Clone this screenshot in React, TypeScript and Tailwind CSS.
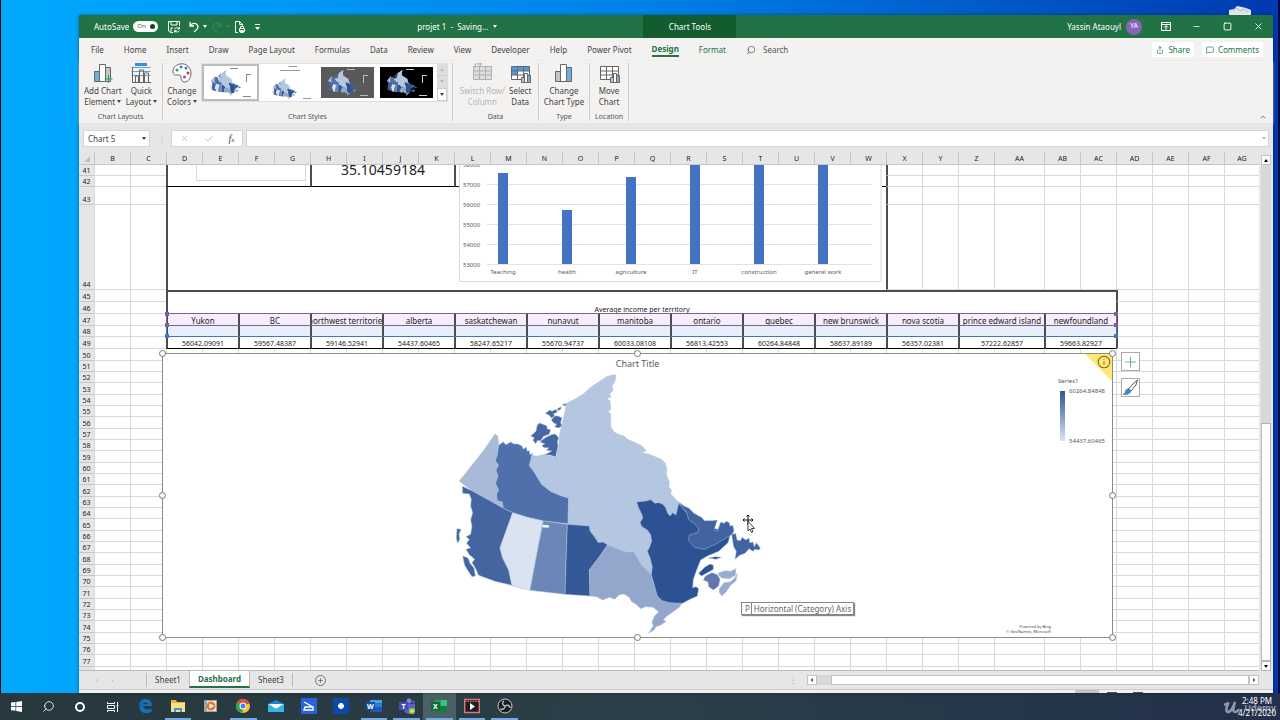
import type { ReactNode } from "react";
import { Check, ChevronUp, Info, MessageSquare, Minus, Plus, Search, Share, Square, X } from "lucide-react";
import clsx from "clsx";

const MENU_TABS = [
  "File",
  "Home",
  "Insert",
  "Draw",
  "Page Layout",
  "Formulas",
  "Data",
  "Review",
  "View",
  "Developer",
  "Help",
  "Power Pivot",
];

const COLUMNS = [
  "B", "C", "D", "E", "F", "G", "H", "I", "J", "K", "L", "M", "N", "O", "P", "Q",
  "R", "S", "T", "U", "V", "W", "X", "Y", "Z", "AA", "AB", "AC", "AD", "AE", "AF", "AG",
];

const TERRITORIES = [
  { name: "Yukon", income: "56042.09091" },
  { name: "BC", income: "59567.48387" },
  { name: "northwest territories", income: "59146.52941" },
  { name: "alberta", income: "54437.60465" },
  { name: "saskatchewan", income: "58247.65217" },
  { name: "nunavut", income: "55670.94737" },
  { name: "manitoba", income: "60033.08108" },
  { name: "ontario", income: "56813.42553" },
  { name: "quebec", income: "60264.84848" },
  { name: "new brunswick", income: "58637.89189" },
  { name: "nova scotia", income: "56357.02381" },
  { name: "prince edward island", income: "57222.62857" },
  { name: "newfoundland", income: "59663.82927" },
];

const JOBS = [
  { name: "Teaching", top: 8 },
  { name: "health", top: 45 },
  { name: "agriculture", top: 12 },
  { name: "IT", top: 0 },
  { name: "construction", top: 0 },
  { name: "general work", top: 0 },
];

const REGIONS = [
  { id: "yukon", fill: "#a9bad8", d: "M165 204L173 210 176 230 172 268 166 284 176 298 168 312 174 330 167 352 176 372 170 385 172 404 187 408 190 426 150 404 100 378 58 345 90 305 132 252z" },
  { id: "nwt", fill: "#4f70aa", d: "M176 238L184 232 190 228 198 236 212 228 222 234 234 234 246 240 250 250 258 243 262 256 268 254 270 266 278 262 274 272 272 285 268 298 285 322 305 355 332 376 360 388 386 396 384 473 345 469 310 465 262 454 218 440 190 427 187 408 172 404 170 385 176 372 167 352 174 330 168 312 176 298 166 284 172 268z" },
  { id: "banks", fill: "#4667a4", d: "M272 210l16-14 4-20 8-5 8 4 12 4 2 10 10 2-5 14-16 6-10 14-8-2-6 10-8-10 4-8z" },
  { id: "victoria", fill: "#4667a4", d: "M306 222l12-8 16-8 12-2 10 12-4 12 2 12-7 33-14-5-20-2 12-5 10-6-16-2 8-8-14 0-8-6 10-6-14-4z" },
  { id: "melville", fill: "#4667a4", d: "M316 142l14-10 6 4 12-6 4 8-12 6 4 6-10 6-6-8zM352 128l12-6-2 8-8 4zM366 116l14-4-4 8zM334 162l10-12 10 0 12 6-4 14 4 10-10 6-12-4 6-8-8-2z" },
  { id: "nunavut", fill: "#b4c6e0", d: "M380 112L404 100 430 84 452 64 476 48 500 32 518 27 528 27 524 48 516 60 519 74 508 84 514 92 500 98 510 104 512 130 504 136 512 145 512 182 522 198 538 206 552 210 562 220 586 230 606 240 618 254 605 260 625 264 640 270 664 280 676 292 681 312 678 322 684 338 688 352 686 362 694 372 692 384 702 394 718 412 716 430 708 447 698 440 690 450 682 440 677 425 668 414 655 410 645 412 632 401 618 405 590 408 596 426 606 446 608 456 600 470 606 482 622 492 632 506 635 526 628 545 622 556 630 575 637 602 634 626 618 610 605 598 594 576 585 560 570 556 556 558 535 550 505 536 488 528 475 530 466 516 450 495 448 480 384 474 386 396 360 388 332 376 305 355 285 322 268 298 272 285 276 268 290 271 310 266 330 270 349 274 356 240 360 200 370 160z" },
  { id: "bc", fill: "#44659f", d: "M67 361L95 374 150 404 190 427 218 440 200 490 180 546 188 576 206 612 216 658 165 646 116 628 106 606 96 590 104 580 88 566 78 550 92 546 80 532 88 520 78 512 92 505 96 480 92 462 98 440 92 420 94 400 88 384 68 382zM51 488L63 490 57 504 59 520 53 532 49 516zM68 570L84 576 90 592 102 606 106 630 96 632 84 614 74 598z" },
  { id: "alberta", fill: "#dae3f1", d: "M218 440L262 454 310 465 296 535 270 673 216 660 206 612 188 576 180 546 200 490z" },
  { id: "saskatchewan", fill: "#6a87b7", d: "M310 465L382 475 380 520 375 685 270 673 296 535z" },
  { id: "lake", fill: "#ffffff", d: "M306 476L328 478 326 485 308 484z" },
  { id: "manitoba", fill: "#335997", d: "M382 475L448 480 450 495 466 516 475 530 488 528 503 536 480 570 448 612 450 690 375 685z" },
  { id: "ontario", fill: "#93a7cd", d: "M503 536L535 550 556 558 582 558 594 578 605 598 618 610 634 626 642 655 652 690 666 704 690 710 728 708 718 724 698 738 678 752 670 762 678 766 664 776 648 782 642 792 626 801 640 780 636 768 644 750 656 738 640 724 616 722 602 728 590 716 574 706 568 694 552 684 538 686 524 700 508 694 488 702 470 692 450 690 448 612 480 570z" },
  { id: "quebec", fill: "#2c5294", d: "M590 408L618 405 632 401 645 412 655 410 668 414 677 425 682 440 690 450 698 440 708 447 716 412 740 440 800 480 872 502 864 530 836 556 802 570 782 582 770 612 760 640 758 665 768 662 776 668 772 690 750 700 728 712 690 710 666 704 652 690 642 655 634 626 637 602 630 575 622 556 628 545 635 526 632 506 622 492 606 482 600 470 608 456 606 446 596 426z" },
  { id: "labrador", fill: "#41639f", d: "M716 408l16 12 14 6 16 16 22 12 10 10 22 0 16-2-10 30 10 4 10-28 10 4 8-6 8 4 2 10 8-2 4 14-4 12-50 30-36 16-28-6-20-22 4-15 26-8 2-12-12-14-18-12-6-22-14-14z" },
  { id: "newfoundland", fill: "#41639f", d: "M875 506l12-4 4 20 10 2 6-10 10 8 10-6 2 14 10-2 4 14 6-12 12 16-4 6-12-2-6 6-12-8-12 14-16 6-14 12 4-24-8-14z" },
  { id: "gaspe", fill: "#2c5294", d: "M776 622l18-18 16-10 10 4 0 12-14 8-22 12zM806 576l20-4 18 2-16 6z" },
  { id: "new-brunswick", fill: "#6175af", d: "M796 630l20-10 16 6 8 14-4 20-16 12-14-10-2-14-14-6z" },
  { id: "nova-scotia", fill: "#9aabd0", d: "M836 620l20-6 16 2 16-8-2 20-18 10-22-2-10-8zM838 668l14-18 18-2 14-12 8-14-4 22-16 14-14 20-12 12-8-10z" },
];

const GRIDLINE = "border-l border-b border-[#d9d9d9]";

function CanadaMap({ className }: { className?: string }) {
  return (
    <svg viewBox="0 0 1020 825" className={className} aria-hidden="true">
      {REGIONS.map((r) => (
        <path key={r.id} d={r.d} fill={r.fill} stroke="#a9bcdc" strokeWidth="1.5" strokeLinejoin="round" />
      ))}
    </svg>
  );
}

function Caret({ up = false }: { up?: boolean }) {
  return (
    <svg width="4" height="3" viewBox="0 0 4 3" fill="currentColor" className="inline-block shrink-0">
      <path d={up ? "M0 3h4L2 0z" : "M0 0h4L2 3z"} />
    </svg>
  );
}

function TitleBar() {
  return (
    <header className="flex h-[23px] shrink-0 items-center bg-[#217346] pl-[15px] text-[8px] text-white">
      <label className="flex items-center gap-1">
        AutoSave
        <input type="checkbox" defaultChecked className="sr-only" />
        <span className="flex h-[11px] w-[25px] items-center justify-between rounded-full bg-white pr-[3px] pl-1 text-[6px] text-[#217346]">
          On
          <span className="size-[5px] rounded-full bg-[#1f3d2c]" />
        </span>
      </label>
      <button aria-label="Save" className="ml-[10px]">
        <svg width="12" height="12" viewBox="0 0 12 12" fill="none" stroke="currentColor">
          <path d="M5 11.500H2.500L.5 10V.5h11V5M3 .5v3.500h6V.5M3 11V7h2" />
          <path d="M11.500 6v2H9.500M6.500 11.500v-2h2M6.500 8a2.500 2 0 0 1 4.500-.3M11.300 9.700a2.500 2 0 0 1-4.500.3" />
        </svg>
      </button>
      <button aria-label="Undo" className="ml-2 flex items-center gap-[3px]">
        <svg width="12" height="12" viewBox="0 0 12 12" fill="none" stroke="currentColor" strokeWidth="1.3">
          <path d="M2 1v4h4M2 5c2-3 5-3.500 7-1.500s1 4.500-3 7.500" />
        </svg>
        <Caret />
      </button>
      <button aria-label="Redo" className="ml-1 flex items-center gap-[3px] text-[#3a8359]">
        <svg width="12" height="12" viewBox="0 0 12 12" fill="none" stroke="currentColor" strokeWidth="1.3">
          <path d="M10 1v4H6M10 5C8 2 5 1.500 3 3.500S2 8 6 11" />
        </svg>
        <Caret />
      </button>
      <button aria-label="Print preview" className="ml-1">
        <svg width="11" height="12" viewBox="0 0 11 12" fill="none" stroke="currentColor">
          <path d="M4 11.500H1.500V.5h4l3 3v1.500M5.500.5v3h3M5.500 7.500h5v3h-5zM6.500 7V5.500h3V7M6.500 9.500h3v2h-3z" />
        </svg>
      </button>
      <button aria-label="Customize toolbar" className="ml-[10px]">
        <svg width="5" height="6" viewBox="0 0 5 6" fill="currentColor">
          <path d="M0 0h5v1H0zM0 3h5L2.500 6z" />
        </svg>
      </button>
      <div className="ml-[157px] flex items-center gap-[5px]">
        <span>projet 1&nbsp; -&nbsp; Saving...</span>
        <Caret />
      </div>
      <div className="ml-[146px] flex h-full w-[93px] items-center justify-center bg-[#125c30]">Chart Tools</div>
      <div className="ml-auto flex items-center">
        <span>Yassin Ataouyl</span>
        <span className="mr-2 ml-[5px] flex size-4 items-center justify-center rounded-full bg-[#8764b8] text-[7px]">
          YA
        </span>
        <button aria-label="Ribbon display options" className="flex w-[31px] justify-center">
          <svg width="10" height="9" viewBox="0 0 10 9" fill="none" stroke="currentColor">
            <path d="M.5.5h9v8h-9zM.5 2.500h9M5 8V4M3 5.500l2-2 2 2" />
          </svg>
        </button>
        <button aria-label="Minimize" className="flex w-[31px] justify-center">
          <Minus size={9} />
        </button>
        <button aria-label="Restore" className="flex w-[31px] justify-center">
          <Square size={9} strokeWidth={2.500} />
        </button>
        <button aria-label="Close" className="flex w-[30px] justify-center">
          <X size={11} />
        </button>
      </div>
    </header>
  );
}

function MenuBar() {
  return (
    <nav className="flex h-[23px] shrink-0 items-center pr-[10px] pl-3 text-[8px] text-[#444]">
      <div className="flex items-center gap-5">
        {MENU_TABS.map((tab) => (
          <button key={tab}>{tab}</button>
        ))}
        <button className="border-b-2 border-[#217346] font-bold text-[#217346]">Design</button>
        <button className="text-[#217346]">Format</button>
      </div>
      <label className="ml-5 flex items-center gap-[7px]">
        <Search size={10} strokeWidth={1.500} className="-scale-x-100" />
        <input aria-label="Search" placeholder="Search" className="w-16 bg-transparent outline-none placeholder:text-[#555]" />
      </label>
      <button className="ml-auto flex h-[15px] items-center gap-1 bg-white px-1 text-[#217346]">
        <Share size={8} /> Share
      </button>
      <button className="ml-2 flex h-[15px] items-center gap-1 bg-white px-1 text-[#217346]">
        <MessageSquare size={8} /> Comments
      </button>
    </nav>
  );
}

function BarsIcon({ plus = false }: { plus?: boolean }) {
  return (
    <svg width="20" height="20" viewBox="0 0 20 20" strokeWidth="1" stroke="#666">
      <path d="M1.500 8.500h5v10h-5z" fill={plus ? "#6cb0e2" : "#c4c4c4"} />
      <path d="M12.500 4.500h5v14h-5z" fill={plus ? "#c4c4c4" : "#6cb0e2"} />
      <path d="M6.500 1.500h6v17h-6z" fill="#fff" />
      {plus && <path d="M15.500 12v8M11.500 16h8" stroke="#2e9e5b" />}
    </svg>
  );
}

function LayoutIcon() {
  return (
    <svg width="20" height="20" viewBox="0 0 20 20" fill="none" stroke="#666">
      <path d="M4 0h12v3H4z" fill="#3f8fce" stroke="none" />
      <path d="M.5 4.500h19M.5 8.500h19M.5 12.500h19" stroke="#5ea6dc" />
      <path d="M1.500 4v15.500H20M4.500 19v-6h3v6M8.500 19V7h4v12M13.500 19V10h4v9" />
    </svg>
  );
}

function PaletteIcon() {
  return (
    <svg width="20" height="20" viewBox="0 0 20 20">
      <path
        d="M10 .8C4.500.8 1 4.500 1 8.500c0 3 2 4 4 3.500 2.500-.5 4 0 4 2.500 0 2.500 1 4.500 3.500 4.500 4 0 6.500-4 6.500-9S15 .8 10 .8z"
        fill="#fff"
        stroke="#666"
      />
      <circle cx="5" cy="7" r="1.500" fill="#2e9e5b" />
      <circle cx="9" cy="4" r="1.500" fill="#3f78c8" />
      <circle cx="14" cy="5" r="1.500" fill="#3f78c8" />
      <circle cx="16" cy="10" r="1.500" fill="#c43e3e" />
      <circle cx="12.500" cy="14" r="1.500" fill="#a04fb4" />
    </svg>
  );
}

function TableIcon({ kind }: { kind: "switch" | "select" | "move" }) {
  const line = kind === "switch" ? "#b0b0b0" : "#666";
  return (
    <svg width="21" height="20" viewBox="0 0 21 20" fill="none" stroke={line}>
      <path d="M1.500 3.500h18v13h-18z" fill={kind === "switch" ? "#dedede" : "#fff"} />
      {kind === "select" && <path d="M2 4h17v4H2zM2 8h6v4H2z" fill="#4a9be0" stroke="none" />}
      <path d="M1.500 8h18M1.500 12h18M7.500 3.500v13M13.500 3.500v13" />
      {kind === "switch" && <path d="M3 5V1h6M7 0l3 1-3 2" />}
      {kind !== "switch" && (
        <>
          <path d="M11.500 14.500h3v5h-3z" fill="#c4c4c4" />
          <path d="M14.500 10.500h3v9h-3z" fill="#fff" />
          <path d="M17.500 12.500h3v7h-3z" fill="#6cb0e2" />
        </>
      )}
    </svg>
  );
}

function RibbonButton({
  icon,
  lines,
  caret,
  disabled,
}: {
  icon: ReactNode;
  lines: [string, string];
  caret?: boolean;
  disabled?: boolean;
}) {
  return (
    <button
      disabled={disabled}
      className={clsx("flex flex-col items-center leading-[11px] whitespace-nowrap", disabled && "text-[#b5b5b5]")}
    >
      <span className="mb-[2px] flex h-5 items-center">{icon}</span>
      <span>{lines[0]}</span>
      <span className="flex items-center gap-[2px]">
        {lines[1]}
        {caret && <Caret />}
      </span>
    </button>
  );
}

function RibbonGroup({ label, className, children }: { label: string; className: string; children: ReactNode }) {
  return (
    <section className={clsx("flex shrink-0 flex-col justify-between border-r border-[#cfcdcb]", className)}>
      <div className="flex justify-center">{children}</div>
      <p className="text-center text-[7px] leading-[8px] text-[#555]">{label}</p>
    </section>
  );
}

function StyleThumb({ className, rule, small }: { className: string; rule: string; small?: boolean }) {
  return (
    <button aria-label="Chart style" className={clsx("relative flex items-center justify-center", className)}>
      <CanadaMap className={clsx("mr-2", small ? "mt-3 h-[22px] w-[28px]" : "h-[28px] w-[34px]")} />
      <span className={clsx("absolute top-[2px] left-1/2 h-px w-2", rule)} />
      <span className={clsx("absolute right-[6px] bottom-[2px] h-px w-2", rule)} />
      {!small && <span className={clsx("absolute top-2 right-[10px] h-2 w-px", rule)} />}
      {!small && <span className={clsx("absolute top-2 right-[6px] h-px w-[5px]", rule)} />}
      {small && <span className={clsx("absolute top-[6px] left-1/3 h-px w-5", rule)} />}
    </button>
  );
}

function Ribbon() {
  return (
    <div className="flex h-[62px] shrink-0 pt-[2px] pb-[2px] text-[8px] text-[#444] shadow-[0_1px_2px_#bbb]">
      <RibbonGroup label="Chart Layouts" className="w-[84px]">
        <div className="flex gap-1">
          <RibbonButton icon={<BarsIcon plus />} lines={["Add Chart", "Element"]} caret />
          <RibbonButton icon={<LayoutIcon />} lines={["Quick", "Layout"]} caret />
        </div>
      </RibbonGroup>
      <RibbonGroup label="Chart Styles" className="w-[290px]">
        <div className="flex gap-1">
          <RibbonButton icon={<PaletteIcon />} lines={["Change", "Colors"]} caret />
          <div className="flex h-[39px] border border-[#dedede] bg-white">
            <StyleThumb className="w-[57px] border-2 border-[#bcbcbc] bg-white" rule="bg-[#888]" />
            <StyleThumb className="mx-[2px] w-14 bg-white" rule="bg-[#999]" small />
            <StyleThumb className="mx-[2px] my-[3px] w-[53px] bg-[#595959]" rule="bg-[#bbb]" />
            <StyleThumb className="mx-[4px] my-[3px] w-[53px] bg-black" rule="bg-[#ccc]" />
            <div className="flex w-[10px] flex-col bg-[#dedede]">
              <button aria-label="Previous styles" className="flex flex-1 items-center justify-center text-[#bbb]">
                <Caret up />
              </button>
              <button aria-label="Next styles" className="flex flex-1 items-center justify-center border-t border-[#ccc] text-[#bbb]">
                <Caret />
              </button>
              <button aria-label="More styles" className="flex flex-1 items-center justify-center border border-[#ccc] bg-white">
                <Caret />
              </button>
            </div>
          </div>
        </div>
      </RibbonGroup>
      <RibbonGroup label="Data" className="w-[86px]">
        <div className="flex gap-1">
          <RibbonButton icon={<TableIcon kind="switch" />} lines={["Switch Row/", "Column"]} disabled />
          <RibbonButton icon={<TableIcon kind="select" />} lines={["Select", "Data"]} />
        </div>
      </RibbonGroup>
      <RibbonGroup label="Type" className="w-[51px]">
        <RibbonButton icon={<BarsIcon />} lines={["Change", "Chart Type"]} />
      </RibbonGroup>
      <RibbonGroup label="Location" className="w-[39px]">
        <RibbonButton icon={<TableIcon kind="move" />} lines={["Move", "Chart"]} />
      </RibbonGroup>
      <button aria-label="Collapse ribbon" className="mr-[6px] ml-auto self-end">
        <ChevronUp size={8} />
      </button>
    </div>
  );
}

function FormulaBar() {
  return (
    <div className="flex h-[29px] shrink-0 items-center bg-[#e6e6e6] pt-[2px] pr-1 pl-1 text-[8px] text-[#444]">
      <label className="relative flex w-[67px] items-center">
        <input
          aria-label="Name box"
          defaultValue="Chart 5"
          className="h-[17px] w-full border border-[#d4d4d4] bg-white pl-1"
        />
        <span className="absolute right-1 flex">
          <Caret />
        </span>
      </label>
      <span className="ml-2 w-[5px] text-center text-[#aaa]">⋮</span>
      <div className="ml-2 flex h-[17px] w-[72px] items-center justify-around border border-[#d4d4d4] bg-white">
        <button aria-label="Cancel" className="text-[#b5b5b5]">
          <X size={9} />
        </button>
        <button aria-label="Enter" className="text-[#b5b5b5]">
          <Check size={10} />
        </button>
        <button aria-label="Insert function" className="font-['Liberation_Serif',serif] text-[10px] leading-none italic">
          f<span className="text-[7px]">x</span>
        </button>
      </div>
      <label className="relative ml-[3px] flex flex-1 items-center">
        <input aria-label="Formula" className="h-[17px] w-full border border-[#d4d4d4] bg-white" />
        <span className="absolute right-[3px] flex text-[#bbb]">
          <Caret />
        </span>
      </label>
    </div>
  );
}

function rowHeight(row: number) {
  if (row === 43) return "h-[18px]";
  if (row === 44) return "h-[85px]";
  if (row === 41 || row === 42 || row === 48) return "h-[11px]";
  if (row <= 50) return "h-3";
  return row % 3 === 2 ? "h-3" : "h-[11px]";
}

// `edge` closes the framed block that sits to the left of the first cell
function Blanks({ count, edge = false }: { count: number; edge?: boolean }) {
  return (
    <>
      {Array.from({ length: count }, (_, i) => (
        <td
          key={i}
          className={edge && i === 0 ? "border-b border-l-2 border-b-[#d9d9d9] border-l-[#4d4d4d]" : GRIDLINE}
        />
      ))}
    </>
  );
}

function RowCells({ row }: { row: number }) {
  switch (row) {
    case 41:
      return (
        <>
          <td colSpan={4} rowSpan={2} className="border-b border-l-2 border-b-black border-l-[#4d4d4d]" />
          <td
            colSpan={4}
            rowSpan={2}
            className="border-b border-l-2 border-b-black border-l-[#4d4d4d] text-center align-top text-[14px] leading-[10px]"
          >
            35.10459184
          </td>
          <td colSpan={12} rowSpan={2} className="border-b border-l-2 border-b-black border-l-[#4d4d4d]" />
          <Blanks count={10} edge />
        </>
      );
    case 42:
    case 44:
      return <Blanks count={10} edge />;
    case 43:
      return (
        <>
          <td colSpan={20} rowSpan={2} className="border-l-2 border-[#4d4d4d]" />
          <Blanks count={10} edge />
        </>
      );
    case 45:
      return (
        <>
          <td colSpan={26} rowSpan={2} className="border-t-2 border-l-2 border-[#4d4d4d] text-center align-bottom">
            Average income per territory
          </td>
          <Blanks count={4} edge />
        </>
      );
    case 46:
      return <Blanks count={4} edge />;
    case 47:
    case 48:
    case 49:
      return (
        <>
          {TERRITORIES.map((t) => (
            <td
              key={t.name}
              colSpan={2}
              className={clsx(
                "border-l-2 border-l-[#4d4d4d]",
                row === 47 && "bg-[#f6effb]",
                row === 48 && "bg-[#e7effb]",
                row === 49 && "border-b border-b-black text-center align-bottom",
              )}
            >
              {row === 47 && (
                <div className="flex justify-center overflow-hidden text-[8px] whitespace-nowrap">{t.name}</div>
              )}
              {row === 49 && t.income}
            </td>
          ))}
          <Blanks count={4} edge />
        </>
      );
    default:
      return <Blanks count={30} />;
  }
}

function SheetTable() {
  const rows = Array.from({ length: 38 }, (_, i) => 41 + i);
  return (
    <table className="w-full table-fixed border-separate border-spacing-0 text-[7px] leading-[9px] text-[#222]">
      <colgroup>
        <col className="w-[15px]" />
        {COLUMNS.map((c) => (
          <col key={c} className={c === "AA" ? "w-[50px]" : c === "AG" ? undefined : "w-9"} />
        ))}
      </colgroup>
      <thead>
        <tr className="h-[13px] bg-[#e6e6e6]">
          <th className="border-b border-[#c6c6c6]">
            <svg width="13" height="10" viewBox="0 0 13 10" fill="#c0c0c0">
              <path d="M11 3v6H5z" />
            </svg>
          </th>
          {COLUMNS.map((c) => (
            <th key={c} className="border-b border-l border-[#c6c6c6] font-normal">
              {c}
            </th>
          ))}
        </tr>
      </thead>
      <tbody>
        {rows.map((row) => (
          <tr key={row} className={rowHeight(row)}>
            <th className="border-b border-[#c6c6c6] bg-[#e6e6e6] align-bottom font-normal">{row}</th>
            <Blanks count={2} />
            <RowCells row={row} />
          </tr>
        ))}
      </tbody>
    </table>
  );
}

function SelectionFrame() {
  return (
    <div className="pointer-events-none absolute top-[161px] left-[87px] w-[951px]">
      <div className="relative h-[13px] border border-[#7c609c]">
        <i className="absolute -top-[2px] -left-[2px] size-1 bg-[#7c609c]" />
        <i className="absolute -top-[2px] -right-[2px] size-1 bg-[#7c609c]" />
        <i className="absolute -bottom-[2px] -left-[2px] size-1 bg-[#7c609c]" />
        <i className="absolute -right-[2px] -bottom-[2px] size-1 bg-[#7c609c]" />
      </div>
      <div className="relative h-[11px] border border-t-0 border-[#4472c4]">
        <i className="absolute -bottom-[2px] -left-[2px] size-1 bg-[#4472c4]" />
        <i className="absolute -right-[2px] -bottom-[2px] size-1 bg-[#4472c4]" />
      </div>
    </div>
  );
}

function JobsChart() {
  return (
    <svg
      className="absolute top-[13px] left-[380px] bg-white"
      width="423"
      height="117"
      viewBox="0 0 423 117"
      role="img"
      aria-label="Average income per job"
    >
      <path d="M.5 0v116.500h421.500V0" fill="none" stroke="#d9d9d9" />
      {["58000", "57000", "56000", "55000", "54000", "53000"].map((label, i) => (
        <g key={label}>
          <path d={`M28 ${i * 20 - 0.5}h385`} stroke="#e2e2e2" />
          <text x="4" y={i * 20 + 2} fontSize="6" fill="#595959">
            {label}
          </text>
        </g>
      ))}
      {JOBS.map((job, i) => (
        <g key={job.name}>
          <rect x={39 + i * 64} y={job.top} width="10" height={99 - job.top} fill="#4472c4" />
          <text x={44 + i * 64} y="109" fontSize="6" fill="#595959" textAnchor="middle">
            {job.name}
          </text>
        </g>
      ))}
    </svg>
  );
}

function Handle({ className }: { className: string }) {
  return <i className={clsx("absolute size-[7px] rounded-full border border-[#777] bg-white", className)} />;
}

function MapChart() {
  return (
    <figure className="absolute top-[201px] left-[83px] h-[285px] w-[951px] border border-[#8c8c8c] bg-white">
      <figcaption className="pt-1 text-center text-[9px] leading-3 text-[#595959]">Chart Title</figcaption>
      <div className="-mt-1 flex items-start">
        <CanadaMap className="ml-[277px] h-[275px] w-[340px]" />
        <p className="mt-[258px] ml-auto text-right text-[4px] leading-[5px] text-[#444]">
          Powered by Bing
          <br />© GeoNames, Microsoft
        </p>
        <div className="mt-[11px] mr-[7px] ml-[7px] text-[6px] leading-[8px] text-[#595959]">
          <p>Series1</p>
          <div className="mt-[2px] flex gap-1">
            <span className="mt-1 ml-[2px] h-[50px] w-[5px] bg-linear-to-b from-[#2f5597] to-[#dae3f3]" />
            <div className="flex h-[58px] flex-col justify-between">
              <span>60264.84848</span>
              <span>54437.60465</span>
            </div>
          </div>
        </div>
      </div>
      <div className="absolute top-0 right-0 h-[27px] w-[27px] bg-[#ffe873] [clip-path:polygon(0_0,100%_0,100%_100%)]" />
      <Info size={14} strokeWidth={1.800} className="absolute top-px right-[1px] text-[#7d6420]" />
      <Handle className="-top-1 -left-1" />
      <Handle className="-top-1 left-1/2 -ml-1" />
      <Handle className="-top-1 -right-1" />
      <Handle className="top-1/2 -left-1 -mt-1" />
      <Handle className="top-1/2 -right-1 -mt-1" />
      <Handle className="-bottom-1 -left-1" />
      <Handle className="-bottom-1 left-1/2 -ml-1" />
      <Handle className="-right-1 -bottom-1" />
      <div className="absolute top-[248px] left-[578px] flex text-[8px] leading-[11px] text-[#666]">
        <span className="border border-[#888] bg-white pr-px pl-[3px] shadow-[1px_1px_1px_#888]">P</span>
        <span className="-ml-px border border-[#888] bg-white px-[2px] whitespace-nowrap shadow-[1px_1px_1px_#888]">
          Horizontal (Category) Axis
        </span>
      </div>
      <svg className="absolute top-[160px] left-[579px]" width="15" height="20" viewBox="0 0 15 20">
        <path d="M6 1v10M1 6h10M4.500 2.500L6 1l1.500 1.500M2.500 4.500L1 6l1.500 1.500M9.500 4.500L11 6 9.500 7.500" fill="none" stroke="#111" />
        <path d="M6 7v10l2-2 1.500 3.500 1.500-.7L9.500 14.500h3z" fill="#fff" stroke="#111" strokeWidth=".8" />
      </svg>
      <div className="absolute -top-[2px] left-[958px] flex flex-col gap-[7px]">
        <button aria-label="Chart elements" className="flex size-[19px] items-center justify-center border border-[#ababab] bg-white text-[#2e9e5b]">
          <Plus size={20} strokeWidth={1} />
        </button>
        <button aria-label="Chart styles" className="flex size-[19px] items-center justify-center border border-[#ababab] bg-white">
          <svg width="17" height="17" viewBox="0 0 17 17">
            <path d="M15.500 1L14 6l-5 6-2.500-2L11 5z" fill="#fff" stroke="#555" />
            <path d="M6.500 9.500L9 12c-1 3-4 4-8 3.500 2-1 2-2 2.500-3.500.5-1.500 1.500-2 3-2.500z" fill="#3f8fce" stroke="#41678f" strokeWidth=".6" />
          </svg>
        </button>
      </div>
    </figure>
  );
}

function Sheet() {
  return (
    <div className="flex min-h-0 flex-1">
      <div className="relative min-w-0 flex-1 overflow-hidden border-b border-[#bbb] bg-white">
        <SheetTable />
        <div className="absolute top-[13px] left-[117px] h-4 w-[110px] border border-t-0 border-[#d9d9d9]" />
        <JobsChart />
        <SelectionFrame />
        <MapChart />
      </div>
      <div className="flex w-[14px] flex-col items-center bg-[#e6e6e6] pt-[3px]">
        <div className="flex min-h-0 w-[10px] flex-1 flex-col bg-[#d8d8d8]">
          <button aria-label="Scroll up" className="flex h-[10px] items-center justify-center border border-[#c4c4c4] bg-white">
            <Caret up />
          </button>
          <div className="mt-auto h-[238px] border border-[#b5b5b5] bg-white" />
          <button aria-label="Scroll down" className="flex h-[10px] items-center justify-center border border-[#b5b5b5] bg-white">
            <Caret />
          </button>
        </div>
      </div>
    </div>
  );
}

function SheetTabs() {
  return (
    <footer className="shrink-0 bg-[#e6e6e6] text-[8px] text-[#444]">
      <div className="flex h-[18px] items-center">
        <span className="w-[67px] pl-[17px] text-[#bbb]">‹&nbsp; &nbsp; &nbsp; ›</span>
        <button className="h-[14px] w-[43px] border-l border-[#bbb]">Sheet1</button>
        <button className="h-[17px] w-[61px] self-start border-x border-b-2 border-x-[#bbb] border-b-[#217346] bg-white pt-px font-bold text-[#217346]">
          Dashboard
        </button>
        <button className="h-[14px] w-[43px] border-r border-[#bbb]">Sheet3</button>
        <button aria-label="New sheet" className="ml-[22px] flex size-[11px] items-center justify-center rounded-full border border-[#777]">
          <Plus size={7} />
        </button>
        <span className="ml-auto text-[#aaa]">⋮</span>
        <div className="mr-[14px] ml-[10px] flex h-[10px] w-[452px] bg-[#d8d8d8]">
          <button aria-label="Scroll left" className="w-[10px] border border-[#c4c4c4] bg-white">
            <svg width="8" height="6" viewBox="0 0 8 6" fill="#555">
              <path d="M5 1v4L2.500 3z" />
            </svg>
          </button>
          <div className="ml-[14px] flex-1 border border-[#c4c4c4] bg-white" />
          <button aria-label="Scroll right" className="w-[10px] border border-[#c4c4c4] bg-white">
            <svg width="8" height="6" viewBox="0 0 8 6" fill="#555">
              <path d="M3 1v4l2.500-2z" />
            </svg>
          </button>
        </div>
      </div>
      <div className="flex h-1 items-end justify-end border-t border-[#ccc] bg-[#f0f0f0] pr-[130px]">
        <span className="h-[3px] w-6 bg-[#c4c4c4]" />
        <span className="ml-2 h-px w-[10px] bg-[#555]" />
        <span className="ml-4 h-px w-[10px] bg-[#555]" />
      </div>
    </footer>
  );
}

const APPS: { name: string; icon: ReactNode; open?: boolean; active?: boolean }[] = [
  {
    name: "Edge",
    icon: (
      <path
        d="M1.500 8.500C2 3.500 5 1 8.500 1c4 0 6.500 3 6.500 7H6c.3 3.500 4.500 4.500 8.500 2.500v3.300C9 16.500 2.500 14.500 2.500 9.500 2.500 7 4 5.200 6 4.500 4 5 2.300 6.500 1.500 8.500zM6 6.200h4.500C10.500 3.500 6.500 3.500 6 6.200z"
        fill="#1173c0"
      />
    ),
  },
  {
    name: "File Explorer",
    open: true,
    icon: (
      <>
        <path d="M1 2h5l1 2h8v10H1z" fill="#e8b73c" />
        <path d="M1 5h14v9H1z" fill="#fbdf85" />
        <path d="M4 14v-4h8v4h-2v-2H6v2z" fill="#3c95dc" />
      </>
    ),
  },
  {
    name: "Media Player",
    icon: (
      <>
        <rect x="1" y="2" width="13" height="12" rx="1" fill="#9ba7ad" />
        <rect x="4" y="3" width="9" height="10" fill="#f3e8dc" />
        <circle cx="8" cy="8" r="4.500" fill="#e8793a" />
        <path d="M6.500 5.500v5L11 8z" fill="#fff" />
      </>
    ),
  },
  {
    name: "Chrome",
    open: true,
    icon: (
      <>
        <circle cx="8" cy="8" r="7" fill="#f7c52b" />
        <path d="M8 8L2 4.500a7 7 0 0 1 12.500 1z" fill="#dd4b3e" />
        <path d="M8 8l-.5 7A7 7 0 0 1 2 4.500z" fill="#2ea352" />
        <circle cx="8" cy="8" r="3.500" fill="#fff" />
        <circle cx="8" cy="8" r="2.500" fill="#4285f4" />
      </>
    ),
  },
  {
    name: "Mail",
    icon: (
      <>
        <path d="M0 6l8-4 8 4v8H0z" fill="#1787d4" />
        <path d="M0 6h16l-8 5z" fill="#f4f8fb" />
        <path d="M0 6l8 5 8-5v8H0z" fill="#35b4ea" />
      </>
    ),
  },
  {
    name: "Scanner",
    icon: (
      <>
        <rect width="16" height="16" fill="#2b62d9" />
        <path d="M3 4l9 5M4 9h8v3H3z" fill="none" stroke="#fff" strokeWidth="1.400" />
      </>
    ),
  },
  {
    name: "Assistant",
    icon: (
      <>
        <rect width="16" height="16" fill="#0b4aa8" />
        <path d="M6.500 5h3v1.500H11v3H9.500V11h-3V9.500H5v-3h1.500z" fill="#fff" />
      </>
    ),
  },
  {
    name: "Word",
    open: true,
    icon: (
      <>
        <path d="M4 2h12v3.500H4z" fill="#41a5ee" />
        <path d="M4 5.500h12v4H4z" fill="#2b7cd3" />
        <path d="M4 9.500h12V14H4z" fill="#185abd" />
        <rect y="4" width="9" height="8" fill="#174ea6" />
        <text x="1" y="11" fontSize="7" fontWeight="bold" fill="#fff">
          W
        </text>
      </>
    ),
  },
  {
    name: "Teams",
    open: true,
    icon: (
      <>
        <circle cx="10" cy="3" r="2.500" fill="#7b83eb" />
        <circle cx="14.500" cy="4" r="1.500" fill="#5059c9" />
        <path d="M5 6h11v5a5 4 0 0 1-11 1z" fill="#5a62c3" />
        <rect y="4" width="9" height="8" fill="#464eb8" />
        <text x="2.500" y="11" fontSize="7" fontWeight="bold" fill="#fff">
          T
        </text>
        <circle cx="13" cy="13" r="3" fill="#a5c94a" />
        <path d="M11.500 13l1 1 2-2" fill="none" stroke="#fff" />
      </>
    ),
  },
  {
    name: "Excel",
    open: true,
    active: true,
    icon: (
      <>
        <path d="M4 2h6v6H4z" fill="#21a366" />
        <path d="M10 2h6v6h-6z" fill="#33c481" />
        <path d="M4 8h12v6H4z" fill="#107c41" />
        <rect y="4" width="9" height="8" fill="#0f6b38" />
        <text x="2" y="11" fontSize="7" fontWeight="bold" fill="#fff">
          X
        </text>
      </>
    ),
  },
  {
    name: "Video Editor",
    open: true,
    icon: (
      <>
        <path d="M.7 1.500h14.600v13H.7z" fill="#231c20" stroke="#d9777c" strokeWidth="1.400" />
        <path d="M1 3.500h14" stroke="#d9777c" strokeDasharray="1.500 1" />
        <path d="M6 5v7l5-3.500z" fill="#fff" />
      </>
    ),
  },
  {
    name: "OBS Studio",
    open: true,
    icon: (
      <>
        <circle cx="8" cy="8" r="7" fill="#1c1c20" stroke="#c9c9c9" />
        <path d="M8 8c-3-1-3-4-1-5M8 8c2.500-2 5 0 5 2M8 8c0 3-3 4-5 3" fill="none" stroke="#b5b5b5" strokeWidth="1.500" />
      </>
    ),
  },
];

function Taskbar() {
  return (
    <footer className="flex h-[27px] shrink-0 items-stretch bg-linear-to-r from-[#26383d] via-[#2b3f48] to-[#22304a] text-white">
      <button aria-label="Start" className="flex w-8 items-center justify-center">
        <svg width="11" height="11" viewBox="0 0 11 11" fill="#fff">
          <path d="M0 1.500L4.500 1v4H0zM5.200.9L11 0v5H5.200zM0 5.800h4.500v4L0 9.300zM5.200 5.800H11V11l-5.800-.9z" />
        </svg>
      </button>
      <button aria-label="Search Windows" className="flex w-8 items-center justify-center">
        <Search size={13} strokeWidth={1.500} className="-scale-x-100" />
      </button>
      <button aria-label="Cortana" className="flex w-8 items-center justify-center">
        <span className="size-[10px] rounded-full border-2 border-white" />
      </button>
      <button aria-label="Task view" className="flex w-[33px] items-center justify-center">
        <svg width="12" height="12" viewBox="0 0 12 12" fill="none" stroke="#fff">
          <path d="M.5 1v1.500h7V1M.5 4.500h7v3h-7zM.5 11V9.500h7V11M10.500 1v10M9.500 4.500h2" />
        </svg>
      </button>
      <div className="flex w-[392px]">
        {APPS.map((app) => (
          <button
            key={app.name}
            aria-label={app.name}
            className={clsx("flex flex-1 items-center justify-center px-[3px]", app.active && "bg-[#4a6065]")}
          >
            <span
              className={clsx(
                "flex h-full w-full items-center justify-center border-b-2",
                app.open ? "border-[#76a9dd]" : "border-transparent",
              )}
            >
              <svg width="16" height="16" viewBox="0 0 16 16">
                {app.icon}
              </svg>
            </span>
          </button>
        ))}
      </div>
      <div className="relative ml-auto flex flex-col justify-center pr-1 text-right text-[8px] leading-[12px]">
        <span className="pr-1">2:48 PM</span>
        <span>4/21/2020</span>
        <span className="absolute top-2 right-1 flex items-center gap-1 text-[9px] leading-none font-bold text-white/50">
          <svg width="17" height="13" viewBox="0 0 17 13" fill="none" stroke="currentColor" strokeWidth="2.500">
            <path d="M1 4c3-1 5-3 4-1S2 11 5 11s6-7 7-10c-1 4-3 10 0 10 2 0 3-1 4-3" />
          </svg>
          Udemy
        </span>
      </div>
    </footer>
  );
}

export default function App() {
  return (
    <div className="flex h-screen flex-col overflow-hidden font-['Noto_Sans','Open_Sans',sans-serif]">
      <main className="relative flex min-h-0 flex-1 border-r-2 border-l border-r-[#00093d] border-l-black bg-linear-to-r from-[#00aaff] via-[#0082e6] to-[#0038b0] pt-[15px] pr-[5px] pl-[78px]">
        <svg className="absolute top-[5px] right-[26px]" width="24" height="10" viewBox="0 0 24 10" aria-hidden="true">
          <path d="M1 10V5l5-1 3-3 5 1 4 1 5 2v5z" fill="#dfe6ee" />
          <path d="M5 6l4-3 3 3 4-2 4 3" fill="none" stroke="#aeb9c8" />
        </svg>
        <div className="flex min-w-0 flex-1 flex-col bg-[#f3f2f1] shadow-[0_0_3px_rgba(0,0,0,0.4)]">
          <TitleBar />
          <MenuBar />
          <Ribbon />
          <FormulaBar />
          <Sheet />
          <SheetTabs />
        </div>
      </main>
      <Taskbar />
    </div>
  );
}
